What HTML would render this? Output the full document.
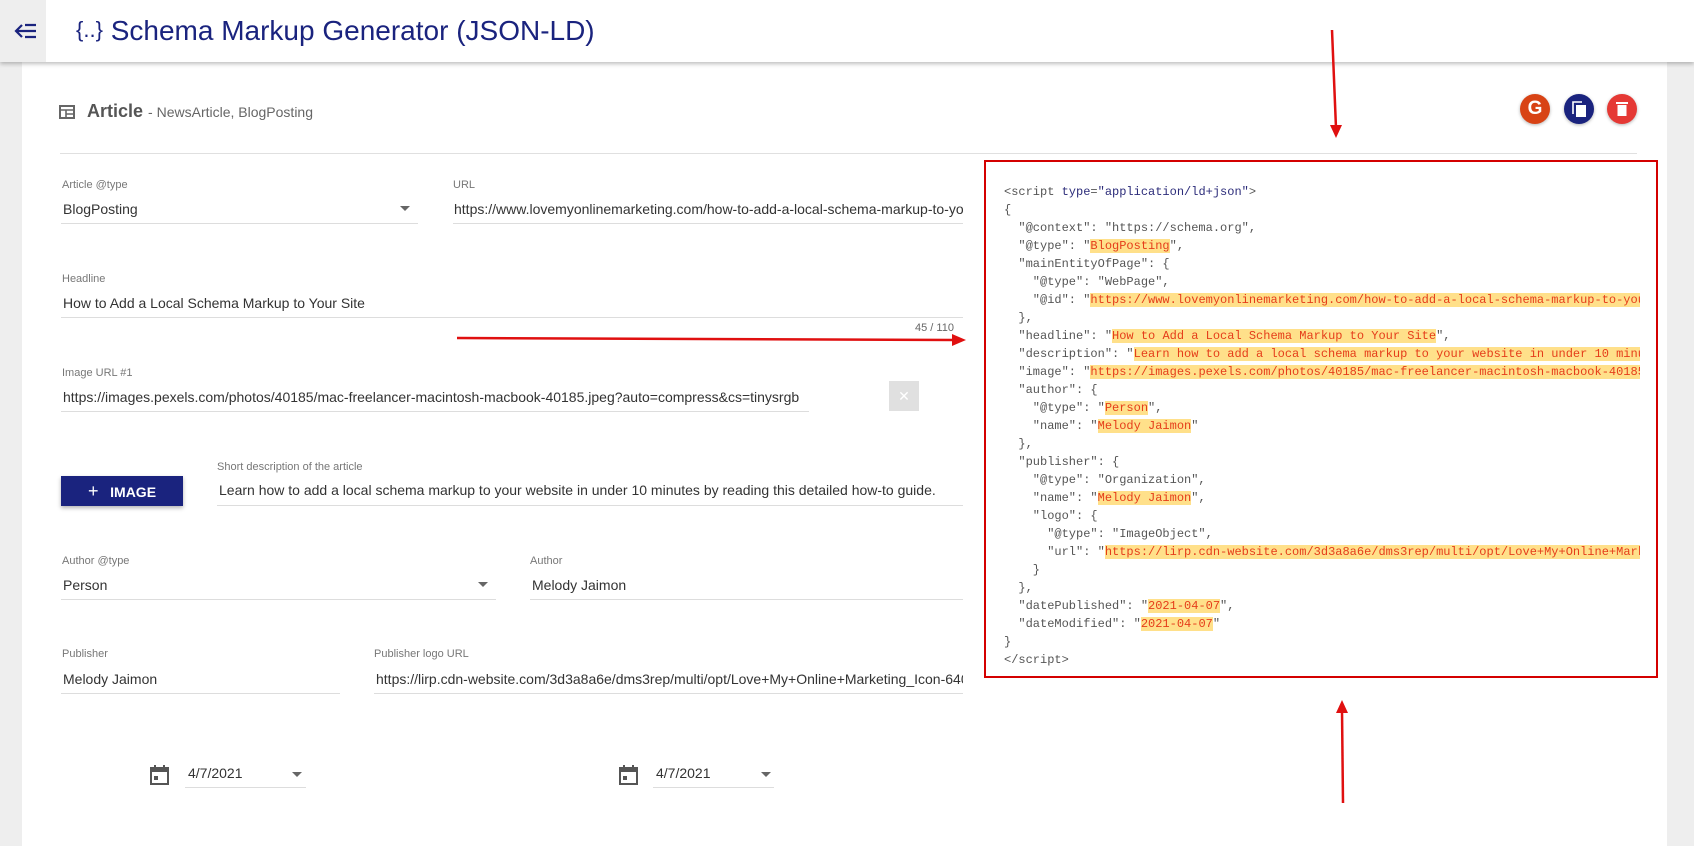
<!DOCTYPE html>
<html><head><meta charset="utf-8"><style>
*{margin:0;padding:0;box-sizing:border-box}
body{width:1694px;height:846px;overflow:hidden;background:#eeeeee;font-family:"Liberation Sans",Arial,sans-serif;position:relative}
.a{position:absolute;white-space:nowrap}
.hdr{left:0;top:0;width:1694px;height:62px;background:#fff;box-shadow:0 2px 4px rgba(0,0,0,.25);z-index:2}
.card{left:22px;top:62px;width:1645px;height:784px;background:#fff}
.lbl{font-size:11px;color:#777}
.val{font-size:14px;color:#333;overflow:hidden;line-height:20px}
.ul{height:1px;background:#ddd}
.arr{width:0;height:0;border-left:5px solid transparent;border-right:5px solid transparent;border-top:5px solid #666}
.code{left:984px;top:160px;width:674px;height:518px;border:2px solid #d40000;background:#fff;overflow:hidden}
pre{position:absolute;left:18px;top:21px;font-family:"Liberation Mono",monospace;font-size:12px;line-height:18px;color:#555;width:636px;overflow:hidden}
pre b{font-weight:normal;background:#ffe08a;color:#e53d1a}
pre i{font-style:normal;color:#2c2c7a}
.btn{border-radius:50%;width:30px;height:30px;box-shadow:0 1px 3px rgba(0,0,0,.3)}
</style></head><body>
<div class="a hdr">
 <div class="a" style="left:0;top:0;width:46px;height:62px;background:#eeeeee"></div>
 <svg class="a" style="left:14px;top:21px" width="24" height="20" viewBox="0 0 24 20"><path d="M8 4L2 10L8 16M2 10H22M11 4H22M11 16H22" stroke="#1a237e" stroke-width="2.2" fill="none"/></svg>
 <div class="a" style="left:76px;top:13px;font-size:28px;color:#1a237e;line-height:36px"><span style="font-size:22px;position:relative;top:-3px">{..}</span> Schema Markup Generator (JSON-LD)</div>
</div>
<div class="a card"></div>
<svg class="a" style="left:59px;top:105px" width="16" height="14" viewBox="0 0 16 14"><rect x="1" y="1" width="14" height="12" fill="none" stroke="#666" stroke-width="2"/><path d="M1 5H15M7 5V13M7 9H15" stroke="#666" stroke-width="1.6"/></svg>
<div class="a" style="left:87px;top:101px;font-size:18px;color:#555"><b>Article</b> <span style="font-size:14px;color:#666">- NewsArticle, BlogPosting</span></div>
<div class="a btn" style="left:1520px;top:94px;background:#d84315;color:#fff;font:bold 19px 'Liberation Sans';text-align:center;line-height:30px">G</div>
<div class="a btn" style="left:1564px;top:94px;background:#1a237e"><svg class="a" style="left:8px;top:7px" width="15" height="17" viewBox="0 0 15 17"><path d="M1 13V1H10" stroke="#fff" stroke-width="1.6" fill="none"/><rect x="4" y="4" width="10" height="12" fill="#fff"/></svg></div>
<div class="a btn" style="left:1607px;top:94px;background:#e53935"><svg class="a" style="left:9px;top:8px" width="12" height="14" viewBox="0 0 12 14"><rect x="0" y="0" width="12" height="2" fill="#fff"/><rect x="1.5" y="3" width="9" height="11" fill="#fff"/></svg></div>
<div class="a" style="left:60px;top:153px;width:1577px;height:1px;background:#e0e0e0"></div>

<div class="a lbl" style="left:62px;top:179px">Article @type</div>
<div class="a val" style="left:63px;top:199px">BlogPosting</div>
<div class="a arr" style="left:400px;top:206px"></div>
<div class="a ul" style="left:61px;top:223px;width:357px"></div>
<div class="a lbl" style="left:453px;top:179px">URL</div>
<div class="a val" style="left:454px;top:199px;width:509px">https://www.lovemyonlinemarketing.com/how-to-add-a-local-schema-markup-to-your-site/</div>
<div class="a ul" style="left:453px;top:223px;width:510px"></div>

<div class="a lbl" style="left:62px;top:273px">Headline</div>
<div class="a val" style="left:63px;top:293px">How to Add a Local Schema Markup to Your Site</div>
<div class="a ul" style="left:61px;top:317px;width:902px"></div>
<div class="a lbl" style="left:915px;top:322px;color:#666">45 / 110</div>

<div class="a lbl" style="left:62px;top:367px">Image URL #1</div>
<div class="a val" style="left:63px;top:387px;width:746px">https://images.pexels.com/photos/40185/mac-freelancer-macintosh-macbook-40185.jpeg?auto=compress&amp;cs=tinysrgb</div>
<div class="a ul" style="left:61px;top:411px;width:748px"></div>
<div class="a" style="left:889px;top:381px;width:30px;height:30px;background:#e0e0e0;color:#fff;text-align:center;line-height:30px;font-size:14px">✕</div>

<div class="a" style="left:61px;top:476px;width:122px;height:30px;background:#1a237e;color:#fff;font-size:14px;font-weight:bold;text-align:center;line-height:30px;box-shadow:0 2px 4px rgba(0,0,0,.3)"><span style="font-size:18px;font-weight:normal">+</span>&nbsp;&nbsp; IMAGE</div>
<div class="a lbl" style="left:217px;top:461px">Short description of the article</div>
<div class="a val" style="left:219px;top:480px;width:744px">Learn how to add a local schema markup to your website in under 10 minutes by reading this detailed how-to guide.</div>
<div class="a ul" style="left:217px;top:505px;width:746px"></div>

<div class="a lbl" style="left:62px;top:555px">Author @type</div>
<div class="a val" style="left:63px;top:575px">Person</div>
<div class="a arr" style="left:478px;top:582px"></div>
<div class="a ul" style="left:61px;top:599px;width:435px"></div>
<div class="a lbl" style="left:530px;top:555px">Author</div>
<div class="a val" style="left:532px;top:575px">Melody Jaimon</div>
<div class="a ul" style="left:530px;top:599px;width:433px"></div>

<div class="a lbl" style="left:62px;top:648px">Publisher</div>
<div class="a val" style="left:63px;top:669px">Melody Jaimon</div>
<div class="a ul" style="left:61px;top:693px;width:279px"></div>
<div class="a lbl" style="left:374px;top:648px">Publisher logo URL</div>
<div class="a val" style="left:376px;top:669px;width:587px">https://lirp.cdn-website.com/3d3a8a6e/dms3rep/multi/opt/Love+My+Online+Marketing_Icon-640w.png</div>
<div class="a ul" style="left:374px;top:693px;width:589px"></div>

<svg class="a" style="left:150px;top:765px" width="19" height="20" viewBox="0 0 19 20"><rect x="1" y="3" width="17" height="16" fill="none" stroke="#555" stroke-width="2"/><rect x="1" y="3" width="17" height="4" fill="#555"/><rect x="4" y="0" width="2" height="4" fill="#555"/><rect x="13" y="0" width="2" height="4" fill="#555"/><rect x="4" y="11" width="4" height="4" fill="#555"/></svg>
<div class="a val" style="left:188px;top:763px">4/7/2021</div>
<div class="a arr" style="left:292px;top:772px"></div>
<div class="a ul" style="left:185px;top:787px;width:121px"></div>
<svg class="a" style="left:619px;top:765px" width="19" height="20" viewBox="0 0 19 20"><rect x="1" y="3" width="17" height="16" fill="none" stroke="#555" stroke-width="2"/><rect x="1" y="3" width="17" height="4" fill="#555"/><rect x="4" y="0" width="2" height="4" fill="#555"/><rect x="13" y="0" width="2" height="4" fill="#555"/><rect x="4" y="11" width="4" height="4" fill="#555"/></svg>
<div class="a val" style="left:656px;top:763px">4/7/2021</div>
<div class="a arr" style="left:761px;top:772px"></div>
<div class="a ul" style="left:653px;top:787px;width:121px"></div>

<div class="a code"><pre>&lt;script <i>type</i>=<i>"application/ld+json"</i>&gt;
{
  "@context": "https://schema.org",
  "@type": "<b>BlogPosting</b>",
  "mainEntityOfPage": {
    "@type": "WebPage",
    "@id": "<b>https://www.lovemyonlinemarketing.com/how-to-add-a-local-schema-markup-to-your-site/</b>"
  },
  "headline": "<b>How to Add a Local Schema Markup to Your Site</b>",
  "description": "<b>Learn how to add a local schema markup to your website in under 10 minutes by reading</b>",
  "image": "<b>https://images.pexels.com/photos/40185/mac-freelancer-macintosh-macbook-40185.jpeg</b>",
  "author": {
    "@type": "<b>Person</b>",
    "name": "<b>Melody Jaimon</b>"
  },
  "publisher": {
    "@type": "Organization",
    "name": "<b>Melody Jaimon</b>",
    "logo": {
      "@type": "ImageObject",
      "url": "<b>https://lirp.cdn-website.com/3d3a8a6e/dms3rep/multi/opt/Love+My+Online+Marketing</b>"
    }
  },
  "datePublished": "<b>2021-04-07</b>",
  "dateModified": "<b>2021-04-07</b>"
}
&lt;/script&gt;</pre></div>

<svg class="a" style="left:0;top:0;z-index:3" width="1694" height="846" viewBox="0 0 1694 846">
 <g stroke="#e01010" stroke-width="2.5" fill="#e01010">
  <line x1="1332" y1="30" x2="1336" y2="128"/>
  <path d="M1330 125L1342 125L1336 138Z" stroke="none"/>
  <line x1="457" y1="338" x2="955" y2="340"/>
  <path d="M952 334L966 340L952 346Z" stroke="none"/>
  <line x1="1343" y1="803" x2="1342" y2="710"/>
  <path d="M1336 713L1342 700L1348 713Z" stroke="none"/>
 </g>
</svg>
</body></html>
